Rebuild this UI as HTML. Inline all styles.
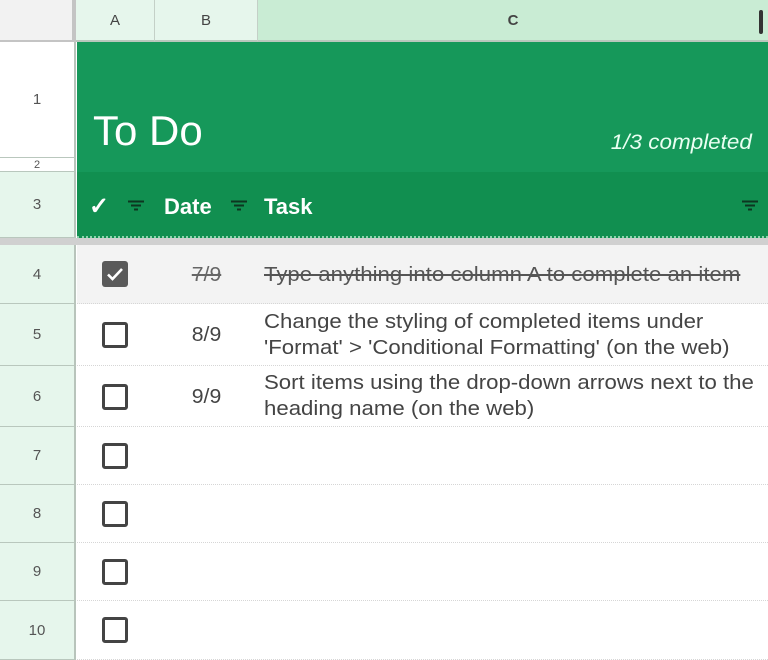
<!DOCTYPE html>
<html><head><meta charset="utf-8"><style>
*{margin:0;padding:0;box-sizing:border-box}
body{width:768px;height:660px;overflow:hidden;background:#fff;font-family:"Liberation Sans",Arial,sans-serif;position:relative}
.a{position:absolute}
.rh{position:absolute;left:0;width:76px;background:#e6f6ec;border-bottom:1px solid #b9c7bd;border-right:2px solid #b8c4bb;color:#555;font-size:15px;display:flex;align-items:center;justify-content:center}
.row{position:absolute;left:77px;right:0;border-bottom:1px dotted #d6d6d6}
.cb{position:absolute;left:102px;width:26px;height:26px;border:3px solid #444;border-radius:3px}
.date{position:absolute;left:155px;width:103px;text-align:center;font-size:20px;color:#444;transform:scaleX(1.06)}
.task{position:absolute;left:264px;font-size:20px;color:#444;line-height:26px;white-space:nowrap;transform:scaleX(1.11);transform-origin:0 0}
.filt{position:absolute;width:18px;height:12px}
</style></head><body>
<div class="a" style="left:0;top:0;width:76px;height:42px;background:#f2f2f2;border-right:4px solid #c4c4c4;border-bottom:2px solid #c4c4c4"></div>
<div class="a" style="left:76px;top:0;width:79px;height:42px;background:#e6f6ec;border-right:1px solid #c4d0c7;border-bottom:2px solid #b9c7bd;color:#444;font-size:15px;text-align:center;line-height:42px">A</div>
<div class="a" style="left:155px;top:0;width:103px;height:42px;background:#e6f6ec;border-right:1px solid #c4d0c7;border-bottom:2px solid #b9c7bd;color:#444;font-size:15px;text-align:center;line-height:42px">B</div>
<div class="a" style="left:258px;top:0;width:510px;height:42px;background:#c9ecd4;border-bottom:2px solid #b9c7bd;color:#444;font-size:15px;font-weight:bold;text-align:center;line-height:42px">C</div>
<div class="a" style="left:759px;top:10px;width:4px;height:24px;background:#333;border-radius:2px"></div>
<div class="rh" style="top:42px;height:116px;background:#fff">1</div>
<div class="rh" style="top:158px;height:14px;background:#fff;font-size:11px;align-items:flex-end;overflow:hidden">2</div>
<div class="rh" style="top:172px;height:66px">3</div>
<div class="a" style="left:0;top:238px;width:768px;height:7px;background:#d0d0d0"></div>
<div class="rh" style="top:245px;height:59px">4</div>
<div class="rh" style="top:304px;height:62px">5</div>
<div class="rh" style="top:366px;height:61px">6</div>
<div class="rh" style="top:427px;height:58px">7</div>
<div class="rh" style="top:485px;height:58px">8</div>
<div class="rh" style="top:543px;height:58px">9</div>
<div class="rh" style="top:601px;height:59px">10</div>
<div class="a" style="left:77px;top:42px;width:691px;height:130px;background:#16985a"></div>
<div class="a" style="left:93px;top:106px;color:#fff;font-size:42px;line-height:50px">To Do</div>
<div class="a" style="right:16px;top:131px;color:#eafff2;font-size:21px;font-style:italic;transform:scaleX(1.07);transform-origin:100% 0">1/3 completed</div>
<div class="a" style="left:77px;top:172px;width:691px;height:66px;background:#118f50;border-bottom:2px dotted #8fd3ae"></div>
<div class="a" style="left:89px;top:192px;color:#fff;font-size:24px;font-weight:bold">✓</div>
<svg class="filt" style="left:127px;top:200px" viewBox="0 0 18 12"><path d="M1 1.5h16M4 5.5h10M7 9.5h4" stroke="#0d3620" stroke-width="2"/></svg>
<div class="a" style="left:164px;top:194px;color:#fff;font-size:22px;font-weight:bold">Date</div>
<svg class="filt" style="left:230px;top:200px" viewBox="0 0 18 12"><path d="M1 1.5h16M4 5.5h10M7 9.5h4" stroke="#0d3620" stroke-width="2"/></svg>
<div class="a" style="left:264px;top:194px;color:#fff;font-size:22px;font-weight:bold">Task</div>
<svg class="filt" style="left:741px;top:200px" viewBox="0 0 18 12"><path d="M1 1.5h16M4 5.5h10M7 9.5h4" stroke="#0d3620" stroke-width="2"/></svg>
<div class="row" style="top:245px;height:59px;background:#f3f3f3"></div>
<div class="a" style="left:102px;top:261px;width:26px;height:26px;background:#5a5a5a;border-radius:3px"></div>
<svg class="a" style="left:105px;top:264px" width="20" height="20" viewBox="0 0 20 20"><path d="M3 10.5l4.5 4.5L17 5" fill="none" stroke="#fff" stroke-width="2.6"/></svg>
<div class="date" style="top:264px;color:#666;text-decoration:line-through">7/9</div>
<div class="task" style="top:262px;color:#555;text-decoration:line-through">Type anything into column A to complete an item</div>
<div class="row" style="top:304px;height:62px"></div>
<div class="cb" style="top:322px"></div>
<div class="date" style="top:324px">8/9</div>
<div class="task" style="top:309px">Change the styling of completed items under<br>'Format' &gt; 'Conditional Formatting' (on the web)</div>
<div class="row" style="top:366px;height:61px"></div>
<div class="cb" style="top:384px"></div>
<div class="date" style="top:386px">9/9</div>
<div class="task" style="top:370px">Sort items using the drop-down arrows next to the<br>heading name (on the web)</div>
<div class="row" style="top:427px;height:58px"></div>
<div class="cb" style="top:443px"></div>
<div class="row" style="top:485px;height:58px"></div>
<div class="cb" style="top:501px"></div>
<div class="row" style="top:543px;height:58px"></div>
<div class="cb" style="top:559px"></div>
<div class="row" style="top:601px;height:59px"></div>
<div class="cb" style="top:617px"></div>
</body></html>
